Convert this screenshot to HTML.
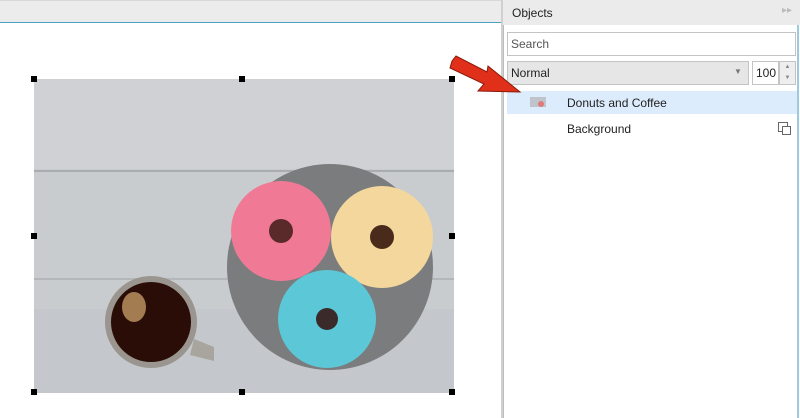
<!DOCTYPE html><html><head><style>
body{margin:0;width:800px;height:418px;overflow:hidden;background:#fff;font-family:"Liberation Sans",sans-serif;position:relative}
.a{position:absolute}
.h{width:6px;height:6px;background:#000;position:absolute}
</style></head><body>
<div class="a" style="left:0;top:0;width:501px;height:21px;background:#ececec;border-top:1px solid #d8d8d8"></div>
<div class="a" style="left:0;top:22px;width:501px;height:1px;background:#4aa3c4"></div>
<div class="a" style="left:501px;top:0;width:2px;height:418px;background:#d0d0d0"></div>
<div class="a" style="left:503px;top:0;width:297px;height:418px;background:#fff;border-left:1px solid #bdbdbd"></div>
<div class="a" style="left:503px;top:0;width:297px;height:25px;background:#ebebeb"></div>
<div class="a" style="left:512px;top:6px;font-size:12px;color:#222">Objects</div>
<div class="a" style="left:782px;top:5px;font-size:10px;color:#bbb">▸▸</div>
<div class="a" style="left:797px;top:25px;width:2px;height:393px;background:#9ccbe0"></div>
<div class="a" style="left:507px;top:32px;width:287px;height:22px;border:1px solid #c4c4c4;background:#fff"></div>
<div class="a" style="left:511px;top:37px;font-size:12px;color:#555">Search</div>
<div class="a" style="left:507px;top:61px;width:240px;height:22px;border:1px solid #c4c4c4;background:#e6e6e6"></div>
<div class="a" style="left:511px;top:66px;font-size:12px;color:#222">Normal</div>
<div class="a" style="left:734px;top:67px;font-size:8px;color:#777">▼</div>
<div class="a" style="left:752px;top:61px;width:25px;height:22px;border:1px solid #c4c4c4;background:#fff"></div>
<div class="a" style="left:756px;top:66px;font-size:12px;color:#222">100</div>
<div class="a" style="left:779px;top:61px;width:15px;height:22px;border:1px solid #c4c4c4;background:#eee;font-size:6px;color:#888;text-align:center;line-height:11px">▲<br>▼</div>
<div class="a" style="left:507px;top:91px;width:290px;height:23px;background:#dcecfc"></div>
<div class="a" style="left:530px;top:97px;width:16px;height:10px;background:#bfc4cc"></div>
<div class="a" style="left:538px;top:101px;width:6px;height:6px;background:#e07a7a;border-radius:50%"></div>
<div class="a" style="left:567px;top:96px;font-size:12px;color:#222">Donuts and Coffee</div>
<div class="a" style="left:567px;top:122px;font-size:12px;color:#222">Background</div>
<div class="a" style="left:778px;top:122px;width:8px;height:8px;border:1px solid #666"></div>
<div class="a" style="left:782px;top:126px;width:7px;height:7px;border:1px solid #666;background:#fff"></div>
<svg class="a" style="left:34px;top:79px" width="420" height="314">
<rect width="420" height="314" fill="#c9cccf"/>
<rect y="0" width="420" height="90" fill="#cfd1d4"/>
<line x1="0" y1="92" x2="420" y2="92" stroke="#a9acb0" stroke-width="2"/>
<line x1="0" y1="200" x2="420" y2="200" stroke="#b3b6ba" stroke-width="2"/>
<rect y="230" width="420" height="84" fill="#c4c7cb"/>
<circle cx="296" cy="188" r="103" fill="#7b7c7e"/>
<circle cx="247" cy="152" r="50" fill="#f07a95"/>
<circle cx="247" cy="152" r="12" fill="#5a2a2a"/>
<circle cx="348" cy="158" r="51" fill="#f3d79c"/>
<circle cx="348" cy="158" r="12" fill="#4a2a1a"/>
<circle cx="293" cy="240" r="49" fill="#5cc7d6"/>
<circle cx="293" cy="240" r="11" fill="#3a2a2a"/>
<circle cx="117" cy="243" r="46" fill="#9a958e"/>
<circle cx="117" cy="243" r="40" fill="#2a0d06"/>
<ellipse cx="100" cy="228" rx="12" ry="15" fill="#a47c52"/>
<path d="M160 260 l20 8 l0 14 l-24 -6z" fill="#a8a59f"/>
</svg>
<div class="h" style="left:31px;top:76px"></div><div class="h" style="left:239px;top:76px"></div><div class="h" style="left:449px;top:76px"></div>
<div class="h" style="left:31px;top:233px"></div><div class="h" style="left:449px;top:233px"></div>
<div class="h" style="left:31px;top:389px"></div><div class="h" style="left:239px;top:389px"></div><div class="h" style="left:449px;top:389px"></div>
<svg class="a" style="left:440px;top:55px" width="90" height="45">
<polygon points="12,6 16,1 47,17 48,11 80,37 38,36 44,29 10,13" fill="#e0301a" stroke="#8a1a0a" stroke-width="1"/>
</svg>
</body></html>
